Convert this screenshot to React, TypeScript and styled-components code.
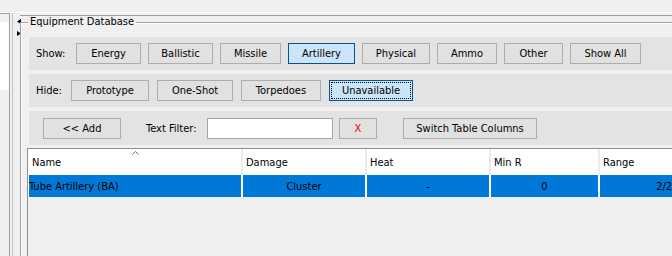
import React from 'react';
import styled, { createGlobalStyle } from 'styled-components';

const GlobalStyle = createGlobalStyle`
  html, body {
    margin: 0;
    padding: 0;
    background: #f0f0f0;
  }
  body {
    font-family: "DejaVu Sans Condensed", "Liberation Sans", sans-serif;
    font-size: 11px;
    color: #000;
  }
`;

const Window = styled.div`
  width: 672px;
  height: 256px;
  box-sizing: border-box;
  padding-top: 12px;
  overflow: hidden;
  background: #f0f0f0;
`;

const Split = styled.div`
  display: flex;
  height: 100%;
  border-top: 1px solid #ffffff;
`;

const LeftPane = styled.div`
  width: 9px;
  flex-shrink: 0;
  border-top: 1px solid #a0a0a0;
  border-right: 1px solid #a0a0a0;
`;

const ListBox = styled.div`
  margin-top: 8px;
  height: 68px;
  background: #ffffff;
`;

const Divider = styled.div`
  width: 8px;
  flex-shrink: 0;
  margin-left: 2px;
  border-left: 1px solid #c4c4c4;
  padding: 6px 0 0 4px;
  box-sizing: border-box;
  display: flex;
  flex-direction: column;
  gap: 7px;
`;

const Right = styled.div`
  flex: 1;
  min-width: 0;
  margin-top: 2px;
  border-top: 1px solid #a0a0a0;
  overflow: hidden;
`;

const Group = styled.fieldset`
  margin: 0;
  padding: 0 0 0 6px;
  width: 720px;
  min-width: 0;
  height: 260px;
  border: 1px solid #a0a0a0;
  box-shadow: inset 1px 1px 0 #ffffff;
`;

const Legend = styled.legend`
  margin-left: 1px;
  padding: 0 2px;
  line-height: 12px;
  font-size: 11px;
  background: #f0f0f0;
`;

const Band = styled.div<{ $h: number; $gap: number; $top?: number; $after: number }>`
  display: flex;
  align-items: center;
  gap: ${p => p.$gap}px;
  height: ${p => p.$h}px;
  margin: ${p => p.$top ?? 0}px 0 ${p => p.$after}px 2px;
  padding-left: 7px;
  background: #e3e3e3;
`;

const Caption = styled.span<{ $w: number; $ml?: number }>`
  width: ${p => p.$w}px;
  margin-left: ${p => p.$ml ?? 0}px;
  flex-shrink: 0;
  white-space: nowrap;
`;

const Btn = styled.button<{ $w: number; $ml?: number; $on?: boolean; $focus?: boolean; $tone?: string }>`
  box-sizing: border-box;
  width: ${p => p.$w}px;
  height: 21px;
  margin: 0 0 0 ${p => p.$ml ?? 0}px;
  padding: 0;
  flex-shrink: 0;
  font: inherit;
  color: ${p => p.$tone ?? '#000'};
  background: ${p => (p.$on ? '#cce4f7' : '#e1e1e1')};
  border: 1px solid ${p => (p.$on ? '#005499' : '#adadad')};
  outline: ${p => (p.$focus ? '1px dotted #000' : 'none')};
  outline-offset: -3px;
  white-space: nowrap;
`;

const Field = styled.input<{ $w: number; $ml?: number }>`
  box-sizing: border-box;
  width: ${p => p.$w}px;
  height: 21px;
  margin: 0 0 0 ${p => p.$ml ?? 0}px;
  padding: 0 3px;
  flex-shrink: 0;
  font: inherit;
  background: #ffffff;
  border: 1px solid #a5a5a5;
  outline: none;
`;

const ScrollPane = styled.div`
  border: 1px solid #8e8f8f;
  height: 120px;
  background: #f0f0f0;
`;

const HeaderRow = styled.div`
  display: flex;
  height: 26px;
  background: #ffffff;
  border-left: 1px solid #ffffff;
`;

const HeadCell = styled.div<{ $w: number }>`
  position: relative;
  box-sizing: border-box;
  width: ${p => p.$w}px;
  flex-shrink: 0;
  padding-left: 3px;
  display: flex;
  align-items: center;
  padding-top: 1px;
  border-right: 2px solid #ececec;
  white-space: nowrap;
`;

const SortMark = styled.svg`
  position: absolute;
  top: 2px;
  left: 50%;
  margin-left: -3px;
`;

const Row = styled.div`
  display: flex;
  height: 22px;
  background: #ffffff;
  border-left: 1px solid #ffffff;
`;

const Cell = styled.div<{ $w: number; $align: 'left' | 'center' }>`
  box-sizing: border-box;
  width: ${p => p.$w}px;
  flex-shrink: 0;
  display: flex;
  align-items: center;
  justify-content: ${p => (p.$align === 'left' ? 'flex-start' : 'center')};
  background: #0078d7;
  color: #000;
  border-right: 2px solid #ffffff;
  white-space: nowrap;
  overflow: hidden;
`;

const Arrow = ({ dir }: { dir: 'left' | 'right' }) => (
  <svg width="4" height="5" viewBox="0 0 4 5">
    {dir === 'left' ? <polygon points="0,2.5 4,0 4,5" fill="#000" /> : <polygon points="0,0 4,2.5 0,5" fill="#000" />}
  </svg>
);

const showButtons = [
  { label: 'Energy', w: 65 },
  { label: 'Ballistic', w: 65 },
  { label: 'Missile', w: 61 },
  { label: 'Artillery', w: 67, on: true },
  { label: 'Physical', w: 68 },
  { label: 'Ammo', w: 60 },
  { label: 'Other', w: 59 },
  { label: 'Show All', w: 71 },
];

const hideButtons = [
  { label: 'Prototype', w: 78 },
  { label: 'One-Shot', w: 76 },
  { label: 'Torpedoes', w: 80 },
  { label: 'Unavailable', w: 84, on: true },
];

const columns = [
  { name: 'Name', w: 214, align: 'left' as const, value: 'Tube Artillery (BA)', sorted: true },
  { name: 'Damage', w: 124, align: 'center' as const, value: 'Cluster' },
  { name: 'Heat', w: 124, align: 'center' as const, value: '-' },
  { name: 'Min R', w: 109, align: 'center' as const, value: '0' },
  { name: 'Range', w: 140, align: 'center' as const, value: '2/2/2' },
];

export default function App() {
  return (
    <>
      <GlobalStyle />
      <Window>
        <Split>
          <LeftPane>
            <ListBox />
          </LeftPane>
          <Divider>
            <Arrow dir="left" />
            <Arrow dir="right" />
          </Divider>
          <Right>
            <Group>
              <Legend>Equipment Database</Legend>

              <Band $h={33} $gap={7} $top={9} $after={4}>
                <Caption $w={33}>Show:</Caption>
                {showButtons.map(b => (
                  <Btn key={b.label} $w={b.w} $on={b.on}>
                    {b.label}
                  </Btn>
                ))}
              </Band>

              <Band $h={33} $gap={8} $after={4}>
                <Caption $w={27}>Hide:</Caption>
                {hideButtons.map(b => (
                  <Btn key={b.label} $w={b.w} $on={b.on} $focus={b.on}>
                    {b.label}
                  </Btn>
                ))}
              </Band>

              <Band $h={34} $gap={0} $after={3}>
                <Btn $w={78} $ml={7}>&lt;&lt; Add</Btn>
                <Caption $w={55} $ml={25}>Text Filter:</Caption>
                <Field $w={126} $ml={6} defaultValue="" />
                <Btn $w={38} $ml={6} $tone="#e00000">X</Btn>
                <Btn $w={134} $ml={26}>Switch Table Columns</Btn>
              </Band>

              <ScrollPane>
                <HeaderRow>
                  {columns.map(c => (
                    <HeadCell key={c.name} $w={c.w}>
                      {c.sorted && (
                        <SortMark width="7" height="4" viewBox="0 0 7 4">
                          <polyline points="0.5,3.5 3.5,0.5 6.5,3.5" fill="none" stroke="#6d6d6d" strokeWidth="1" />
                        </SortMark>
                      )}
                      {c.name}
                    </HeadCell>
                  ))}
                </HeaderRow>
                <Row>
                  {columns.map(c => (
                    <Cell key={c.name} $w={c.w} $align={c.align}>
                      {c.value}
                    </Cell>
                  ))}
                </Row>
              </ScrollPane>
            </Group>
          </Right>
        </Split>
      </Window>
    </>
  );
}
